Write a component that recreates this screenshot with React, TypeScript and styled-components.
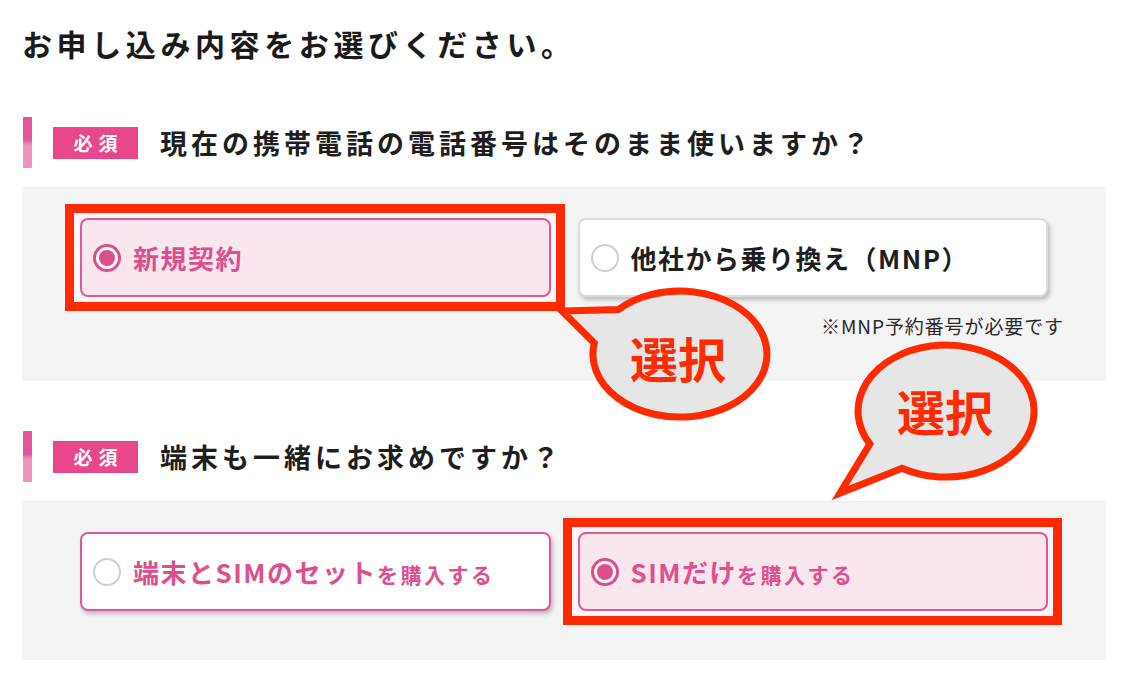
import React from 'react';
import styled, { createGlobalStyle } from 'styled-components';

const GlobalStyle = createGlobalStyle`
  html, body {
    margin: 0;
    padding: 0;
    background: #ffffff;
  }
  body {
    font-family: "Noto Sans CJK JP", "Noto Sans", sans-serif;
    color: #1e1e1e;
  }
`;

const Page = styled.div`
  position: relative;
  width: 1126px;
  height: 684px;
  box-sizing: border-box;
  padding: 25px 20px 0 22px;
  overflow: hidden;
`;

const Title = styled.h1`
  margin: 0;
  font-size: 30px;
  line-height: 36px;
  font-weight: 700;
  letter-spacing: 4.6px;
  color: #1a1a1a;
`;

const QuestionHeader = styled.div<{ $top: number }>`
  display: flex;
  align-items: center;
  height: 51px;
  margin-top: ${(p) => p.$top}px;
`;

const Bar = styled.span`
  display: block;
  width: 9px;
  height: 51px;
  margin-left: 1px;
  border-radius: 1px;
  background: linear-gradient(to bottom, #e3559a 0%, #e3559a 45%, #ec94bd 55%, #ec94bd 100%);
`;

const Badge = styled.span`
  display: flex;
  align-items: center;
  justify-content: center;
  width: 85px;
  height: 32px;
  margin-left: 21px;
  background: #e8478c;
  color: #ffffff;
  font-size: 19px;
  font-weight: 700;
  letter-spacing: 6px;
  padding-left: 6px;
  box-sizing: border-box;
`;

const QuestionText = styled.span`
  margin-left: 22px;
  font-size: 27px;
  font-weight: 700;
  letter-spacing: 4px;
  color: #1e1e1e;
`;

const Panel = styled.div<{ $bottom: number }>`
  isolation: isolate;
  margin-top: 19px;
  width: 1084px;
  box-sizing: border-box;
  background: #f4f4f4;
  border-top: 1px solid #ebebeb;
  padding: 30px 58px ${(p) => p.$bottom}px;
`;

const Options = styled.div`
  display: grid;
  grid-template-columns: 1fr 1fr;
  column-gap: 27px;
`;

const Card = styled.div<{ $selected?: boolean; $tone: 'pink' | 'gray'; $highlighted?: boolean }>`
  position: relative;
  display: flex;
  align-items: center;
  height: 79px;
  box-sizing: border-box;
  padding-left: 11px;
  border-radius: 8px;
  border: 2px solid ${(p) => (p.$tone === 'pink' ? '#df5897' : '#dcdcdc')};
  background: ${(p) => (p.$selected ? '#f9e6ee' : '#ffffff')};
  box-shadow: ${(p) => (p.$selected ? 'none' : '2px 3px 4px rgba(60, 60, 60, 0.3)')};

  ${(p) =>
    p.$highlighted &&
    `
    &::after {
      content: '';
      position: absolute;
      z-index: -1;
      top: -16px;
      left: -17px;
      right: -16px;
      bottom: -16px;
      border: 9px solid #ff2a00;
      background: #fdf6f8;
    }
  `}
`;

const Radio = styled.span<{ $checked?: boolean }>`
  flex: none;
  position: relative;
  width: 28px;
  height: 28px;
  box-sizing: border-box;
  border-radius: 50%;
  background: #ffffff;
  border: ${(p) => (p.$checked ? '3px solid #dc4f8c' : '2px solid #cfcfcf')};

  ${(p) =>
    p.$checked &&
    `
    &::after {
      content: '';
      position: absolute;
      top: 3px;
      left: 3px;
      width: 16px;
      height: 16px;
      border-radius: 50%;
      background: #dc4f8c;
    }
  `}
`;

const Label = styled.span<{ $tone: 'pink' | 'dark' }>`
  margin-left: 12px;
  font-size: 26px;
  font-weight: 700;
  letter-spacing: 1.5px;
  color: ${(p) => (p.$tone === 'pink' ? '#de4f8d' : '#1e1e1e')};
`;

const Small = styled.span`
  font-size: 21px;
  letter-spacing: 2.5px;
`;

const Note = styled.div`
  margin-top: 18px;
  margin-right: -16px;
  text-align: right;
  font-size: 19px;
  line-height: 22px;
  letter-spacing: 0.9px;
  color: #2a2a2a;
`;

const Bubble = styled.svg<{ $left: number; $top: number }>`
  position: absolute;
  left: ${(p) => p.$left}px;
  top: ${(p) => p.$top}px;
  overflow: visible;
`;

const BubbleText = styled.text`
  font-family: "Noto Sans CJK JP", sans-serif;
  font-weight: 700;
  font-size: 48px;
  fill: #ff2a00;
`;

const SelectBubble = ({
  left,
  top,
  path,
  cx,
  cy,
}: {
  left: number;
  top: number;
  path: string;
  cx: number;
  cy: number;
}) => (
  <Bubble $left={left} $top={top} width={240} height={180} viewBox="0 0 240 180">
    <path d={path} fill="#e6e6e6" stroke="#ff2a00" strokeWidth={7} strokeLinejoin="miter" strokeMiterlimit={10} />
    <BubbleText x={cx} y={cy} textAnchor="middle" dominantBaseline="central">
      選択
    </BubbleText>
  </Bubble>
);

export default function App() {
  return (
    <>
      <GlobalStyle />
      <Page>
        <Title>お申し込み内容をお選びください。</Title>

        <QuestionHeader $top={56}>
          <Bar />
          <Badge>必須</Badge>
          <QuestionText>現在の携帯電話の電話番号はそのまま使いますか？</QuestionText>
        </QuestionHeader>
        <Panel $bottom={44}>
          <Options>
            <Card $tone="pink" $selected $highlighted>
              <Radio $checked />
              <Label $tone="pink">新規契約</Label>
            </Card>
            <Card $tone="gray">
              <Radio />
              <Label $tone="dark">他社から乗り換え（MNP）</Label>
            </Card>
          </Options>
          <Note>※MNP予約番号が必要です</Note>
        </Panel>

        <QuestionHeader $top={50}>
          <Bar />
          <Badge>必須</Badge>
          <QuestionText>端末も一緒にお求めですか？</QuestionText>
        </QuestionHeader>
        <Panel $bottom={49}>
          <Options>
            <Card $tone="pink">
              <Radio />
              <Label $tone="pink">
                端末とSIMのセット<Small>を購入する</Small>
              </Label>
            </Card>
            <Card $tone="pink" $selected $highlighted>
              <Radio $checked />
              <Label $tone="pink">
                SIMだけ<Small>を購入する</Small>
              </Label>
            </Card>
          </Options>
        </Panel>

        <SelectBubble
          left={550}
          top={280}
          path="M 68.5 29.5 A 87 63 0 1 1 44.3 63 L 12 31 Z"
          cx={128}
          cy={77}
        />
        <SelectBubble
          left={830}
          top={335}
          path="M 72 133.2 A 88 66 0 1 0 39.8 109 L 10 158 Z"
          cx={115}
          cy={75}
        />
      </Page>
    </>
  );
}
